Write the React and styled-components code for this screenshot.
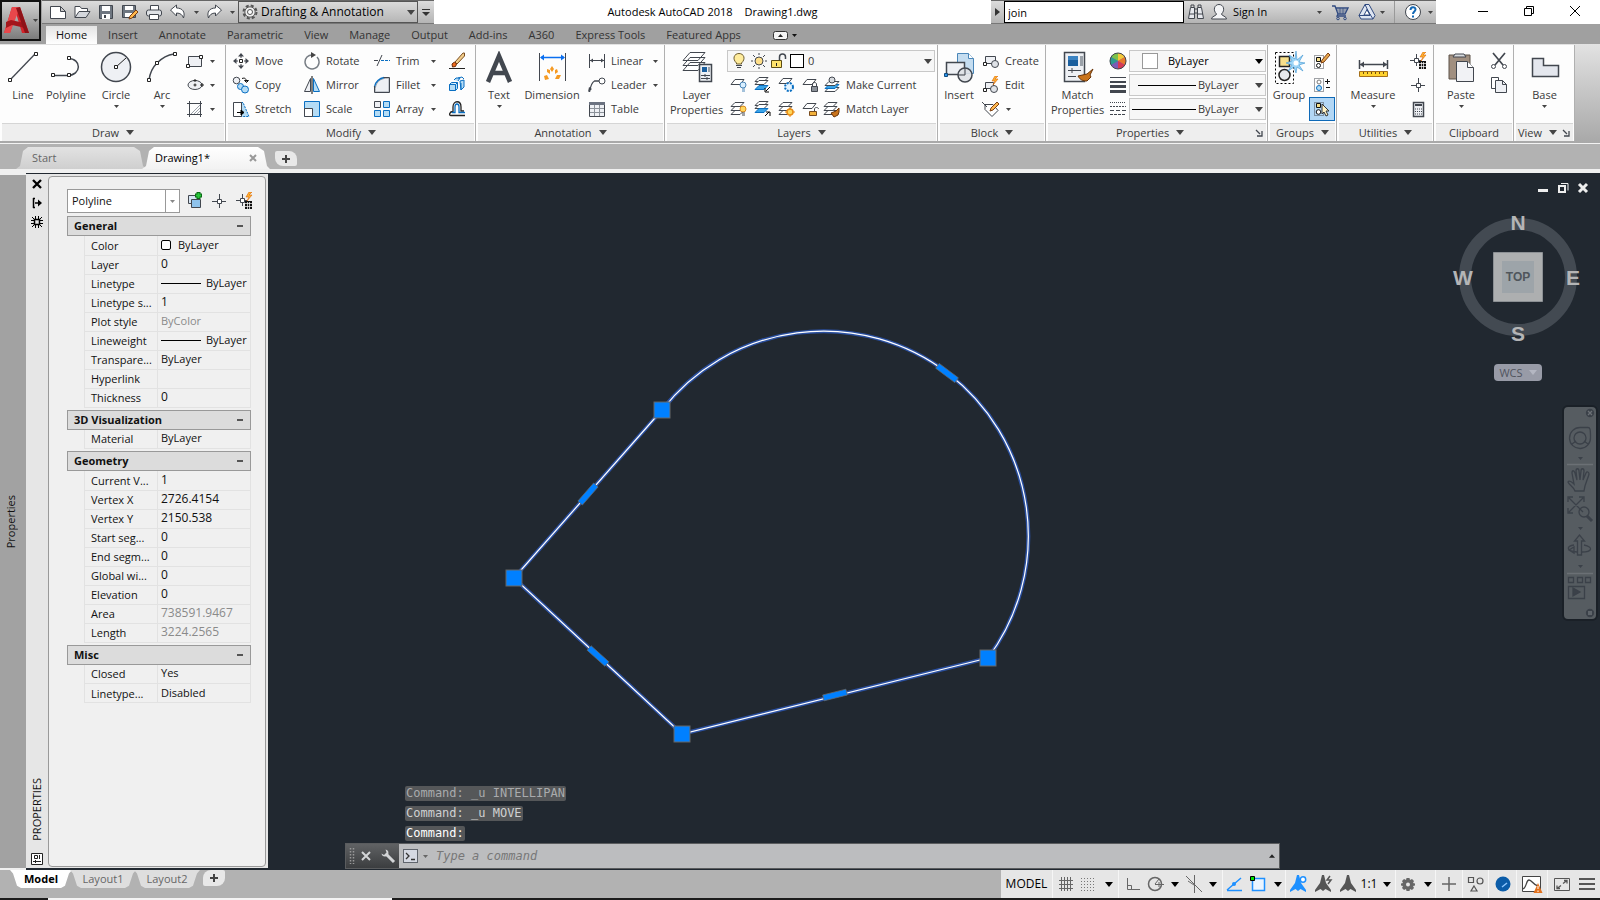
import React, { useState } from "react";
import styled, { createGlobalStyle, css } from "styled-components";

const INK = "#42474f";
const BLUE = "#0a6fc2";
const SKY = "#b5dcf5";
const PAPER = "#eef0f4";

/* ---------- icons ---------- */

const sheet = (y, fill = "#fff") => (
  <path d={`M5 ${y}h9l-4 4H1z`} fill={fill} stroke={INK} />
);

const bulb = (x, y) => (
  <>
    <circle cx={x} cy={y} r="3" fill="#ffd75e" stroke="#d98a1c" />
    <path d={`M${x - 1} ${y + 4}h3M${x - 1} ${y + 6}h3`} stroke={INK} />
  </>
);

const icons = {
  // quick access
  newFile: [18, 18, <path d="M1.500 3.500h10l5 5v7h-15zM11.500 3.500v5h5" fill="#fff" stroke={INK} />],
  open: [18, 18, <><path d="M2 14.500v-11h5l1.500 2h6v3" fill="#fff" stroke={INK} /><path d="M2 14.500l4-6h11l-4 6z" fill="#d4d7dc" stroke={INK} /></>],
  save: [18, 18, <><path d="M2.500 2.500h13v13h-13z" fill="#6e7680" stroke={INK} /><path d="M5 3h8v5H5zM5 11h8v5H5z" fill="#fff" /><path d="M7 12h2v3H7z" fill={INK} /></>],
  saveAs: [18, 18, <><path d="M1.500 2.500h13v12h-13z" fill="#6e7680" stroke={INK} /><path d="M4 3h8v4H4zM4 10h7v4H4z" fill="#fff" /><path d="M8 16l1-3 6-6 2 2-6 6z" fill="#ffb84d" stroke="#7d3f11" /></>],
  print: [18, 18, <><path d="M5.500 7V2.500h8V7" fill="#fff" stroke={INK} /><rect x="1.500" y="7" width="15" height="6" rx="2" fill="#dfe2e6" stroke={INK} /><path d="M4.500 11.500h9v5h-9z" fill="#fff" stroke={INK} /></>],
  undo: [18, 18, <path d="M1.500 7l6-5v3c6 0 9 4 7 10-1-3-3-5-7-5v3z" fill="#fff" stroke={INK} />],
  redo: [18, 18, <path d="M16.500 7l-6-5v3c-6 0-9 4-7 10 1-3 3-5 7-5v3z" fill="#fff" stroke={INK} />],
  cog: [18, 18, <><circle cx="9" cy="9" r="6.500" fill="none" stroke="#555" strokeWidth="2" strokeDasharray="3 2.100" /><circle cx="9" cy="9" r="5.200" fill="#eee" stroke="#555" /><circle cx="9" cy="9" r="2.500" fill="#fff" stroke="#555" /></>],
  binoculars: [18, 18, <><path d="M1.500 15.500l2-11h4v11zM10.500 15.500v-11h4l2 11z" fill="#e7e9ee" stroke={INK} /><path d="M4 4V2h3v2M11 4V2h3v2M7.500 6h3v4h-3zM2 11h5M11 11h5" fill="none" stroke={INK} /></>],
  user: [18, 18, <path d="M1.500 16c0-3 5-3 5-5 -4-4-2-9.500 2.500-9.500S15.500 7 11.500 11c0 2 5 2 5 5z" fill="#f4f5f7" stroke={INK} />],
  cart: [18, 18, <><path d="M1 3h3l3 8h7l3-6H5M7 11l-1 2h9" fill="none" stroke="#304a80" strokeWidth="1.300" /><path d="M6 7h10M7 9h8M9 5v6M12 5v6" stroke="#304a80" strokeWidth=".7" /><circle cx="7" cy="15.500" r="1.300" fill="none" stroke="#304a80" /><circle cx="14" cy="15.500" r="1.300" fill="none" stroke="#304a80" /></>],
  exchange: [18, 18, <><path d="M7 1.500h4l6 11-2 3.500H3l-2-3.500z" fill="#dfe6f2" stroke="#304a80" strokeLinejoin="round" /><path d="M9 6.500l3 5.500H6z" fill="#fff" stroke="#304a80" /><path d="M7 1.500l5 10.500M1 12.500h11M15 16L9 6.500" stroke="#304a80" fill="none" /></>],
  help: [18, 18, <><circle cx="9" cy="9" r="7.500" fill="#fff" stroke={INK} /><path d="M6.500 7c0-3.500 5-3.500 5-.5 0 2-2.500 2-2.500 4.500M9 12.500v2" fill="none" stroke="#1368b5" strokeWidth="2" /></>],
  minimize: [12, 12, <path d="M1 6.500h10" stroke="#000" />],
  restore: [12, 12, <path d="M1.500 3.500h7v7h-7zM3.500 3v-1.500h7v7H9" fill="none" stroke="#000" />],
  close: [12, 12, <path d="M1 1l10 10M11 1L1 11" stroke="#000" />],
  collapse: [15, 9, <><rect x=".5" y=".5" width="14" height="8" rx="2" fill="#f4f4f4" stroke="#333" /><path d="M5 6h5L7.500 3z" fill="#222" /></>],

  // draw
  line: [32, 34, <><path d="M3 29L28 3" stroke={INK} strokeWidth="1.300" /><path d="M1.500 27.500h3v3h-3zM27.500 1.500h3v3h-3z" fill="#fff" stroke="#222" /></>],
  polyline: [32, 34, <><path d="M4 24.500h13c15 0 15-17 1-17" fill="none" stroke={INK} strokeWidth="1.500" /><path d="M1.500 22.500h3v3h-3zM17.500 22.500h3v3h-3zM17.500 5.500h3v3h-3z" fill="#fff" stroke="#222" /></>],
  circle: [32, 34, <><circle cx="16" cy="16" r="14.500" fill={PAPER} stroke={INK} strokeWidth="1.500" /><path d="M16 16l10-9" stroke="#222" /><path d="M14.500 14.500h3v3h-3z" fill="#fff" stroke="#222" /></>],
  arc: [32, 34, <><path d="M3 29c1-8 3-12 8-17C16 7 21 4 28 3" fill="none" stroke={INK} strokeWidth="1.500" /><path d="M1.500 27.500h3v3h-3zM9.500 10.500h3v3h-3zM27.500 1.500h3v3h-3z" fill="#fff" stroke="#222" /></>],
  rect: [18, 18, <><path d="M2.500 4.500h13v10h-13z" fill={PAPER} stroke={INK} /><path d="M.5 12.500h3v3h-3zM13.500 3.500h3v3h-3z" fill="#fff" stroke="#222" /></>],
  ellipse: [18, 18, <><ellipse cx="9" cy="9" rx="7" ry="4.500" fill={PAPER} stroke={INK} /><path d="M7.500 9h3M9 7.500v3M8 4h2v1H8zM15 8h2v2h-2z" stroke="#222" fill="none" /></>],
  hatch: [18, 18, <><path d="M1 3.500h15M1 14.500h15M3.500 1v16M14.500 1v16" stroke={INK} /><path d="M8 14l6-6M11 14l3-3M5 14l9-9" stroke="#9aa1a9" /></>],

  // modify
  move: [18, 18, <><path d="M9 1l3 3.500H6zM9 17l3-3.500H6zM1 9l3.500-3v6zM17 9l-3.500-3v6z" fill={INK} /><path d="M9 4v2M9 12v2M4 9h2M12 9h2" stroke={INK} /><path d="M7.500 7.500h3v3h-3z" fill="#fff" stroke="#222" /></>],
  copy: [18, 18, <><circle cx="4.500" cy="4.500" r="3.300" fill={PAPER} stroke={INK} /><path d="M10 2.500c3-1 4 0 4.500 3M12.500 4.500h4l-2 2z" fill="none" stroke="#111" /><circle cx="8.500" cy="10.500" r="3" fill={SKY} stroke={BLUE} /><circle cx="13" cy="13.500" r="3.500" fill={SKY} stroke={BLUE} /></>],
  stretch: [18, 18, <><path d="M9 2.500h2l6 14H9z" fill={SKY} stroke={BLUE} strokeDasharray="2 1" /><path d="M1.500 2.500h8v14h-8z" fill="#fff" stroke={INK} /><path d="M5 12.500h6M9 10l3 2.500L9 15z" stroke="#000" /></>],
  rotate: [18, 18, <><path d="M10 3a7 7 0 1 0 4 2" fill="none" stroke="#777d84" strokeWidth="1.500" /><path d="M8 0l5 3-5 3z" fill="#444" /></>],
  mirror: [18, 18, <><path d="M7.500 2.500v13h-6z" fill={PAPER} stroke={INK} /><path d="M10.500 2.500v13h6z" fill={SKY} stroke={BLUE} /><path d="M9 0v18" stroke="#000" /></>],
  scale: [18, 18, <><path d="M1.500 1.500h15v15h-15z" fill={SKY} stroke={BLUE} /><path d="M1.500 8.500h8v8h-8z" fill="#fff" stroke={INK} /></>],
  trim: [18, 18, <><path d="M1 8.500h4" stroke={INK} /><path d="M8 8.500h9" stroke={BLUE} strokeDasharray="3 1" /><path d="M4 14L9 3" stroke={INK} /></>],
  fillet: [18, 18, <><path d="M2 16C2 6 7 2 16 2v14z" fill={PAPER} stroke="#9aa1a9" /><path d="M1.500 11C2 6 7 2 11 1.500" fill="none" stroke={BLUE} strokeWidth="1.500" /><path d="M1.500 10v6.500h15V1.500h-6" fill="none" stroke={INK} /></>],
  array: [18, 18, <><path d="M1.500 1.500h6v6h-6z" fill={PAPER} stroke={INK} /><path d="M10.500 1.500h6v6h-6zM1.500 10.500h6v6h-6zM10.500 10.500h6v6h-6z" fill={SKY} stroke={BLUE} /></>],
  erase: [18, 18, <><path d="M1 16.500h16" stroke="#222" /><path d="M7 10l8-9h1.500v3L9 12z" fill="#f1cd8b" stroke="#7a4c1e" /><path d="M4 12l2.500-2 2 2-1 2.500-3 .5z" fill="#f06a1c" stroke="#6a2b09" /></>],
  explode: [18, 18, <><path d="M1.500 8.500l2-2h6v6l-2 2h-6zM1.500 8.500h6l2-2M7.500 8.500v6M6 4l2-2h4l-2 3M12 5l4-1v7l-3 3z" fill={SKY} stroke={BLUE} /><path d="M13 7v7M10 2l4-1 2 2" fill="none" stroke={BLUE} /></>],
  offset: [18, 18, <><path d="M17 15.500H3c-2.500 0-1.500-4 2-4V7c0-7 8-7 8 0v4h3" fill="none" stroke="#222" strokeWidth="1.300" /><path d="M17 12.500h-6V7c0-4-4-4-4 0v5.500H4" fill="none" stroke={BLUE} strokeWidth="1.300" /></>],

  // annotation
  text: [32, 34, <path d="M5 31L16 5l11 26M9 22h14" fill="none" stroke={INK} strokeWidth="4.500" />],
  dimension: [32, 34, <><path d="M3.500 2v28M29.500 2v28" stroke={INK} /><path d="M5 6.500h23" stroke="#0a6ff0" strokeWidth="1.500" /><path d="M4 6.500l4-3v6zM29 6.500l-4-3v6z" fill="#0a6ff0" /><path d="M8 25l3-1 2 4-4 1zM11 18l3 1v4l-3-2zM16 15l2 3-2 3-2-3zM21 18l1 3-3 2v-4zM25 24l-2 4-4 0 2-4z" fill="#f59a23" /></>],
  linear: [18, 18, <><path d="M1.500 2v14M16.500 2v14M2 8.500h14" stroke={INK} /><path d="M2 8.500l3-2v4zM16 8.500l-3-2v4z" fill={INK} /></>],
  leader: [18, 18, <><path d="M1.500 16c1-6 3-10 5-11h5" fill="none" stroke={INK} strokeWidth="1.300" /><path d="M0 16l1-5 3 2z" fill={INK} /><circle cx="14" cy="5" r="3" fill="#fff" stroke={INK} /></>],
  table: [18, 18, <><path d="M1.500 2.500h15v14h-15z" fill={PAPER} stroke={INK} /><path d="M1 2h16v3H1z" fill="#6b7280" /><path d="M2 8.500h14M2 12.500h14M6.500 5v11M11.500 5v11" stroke="#8b9199" /></>],

  // layers
  layerProps: [32, 34, <><path d="M9 1.500h15l-7 8H2zM9 6.500h15l-7 8H2zM9 11.500h15l-7 8H2z" fill="#fff" stroke={INK} /><path d="M18.500 13.500h12v17h-12z" fill={PAPER} stroke={INK} strokeWidth="1.500" /><path d="M21 16h5v5h-5z" fill="#1b5f9e" /><path d="M27 16h2v5h-2z" fill="#9aa1a9" /><path d="M20 24.500h9M20 27.500h9M24 23v3M26 26v3" stroke={INK} /></>],
  bulb: [18, 18, <><path d="M6.500 11C2 7 4 1.500 9 1.500S16 7 11.500 11v1h-5z" fill="#ffec9c" stroke="#6b5a2a" /><path d="M6 13.500h6M7 15.500h4" stroke={INK} /></>],
  sun: [18, 18, <><circle cx="9" cy="9" r="4" fill="#ffdf8a" stroke={INK} /><path d="M9 1v2M9 15v2M1 9h2M15 9h2M3 3l2 2M13 13l2 2M15 3l-2 2M5 13l-2 2" stroke={INK} /></>],
  unlock: [18, 18, <><path d="M9.500 8V5c0-4 6-4 6 0v2" fill="none" stroke={INK} strokeWidth="1.500" /><path d="M1.500 8.500h10v7h-10z" fill="#ffe36b" stroke="#5b4b14" /><path d="M6.500 11v3" stroke="#222" /></>],
  layOff: [18, 18, <><path d="M5 3.500h9l-4 5H1z" fill="#fff" stroke={INK} /><circle cx="13" cy="9" r="3" fill="#d9efff" stroke="#4a86b8" /><path d="M12 13h3M12 15h3" stroke="#4a86b8" /></>],
  layIso: [18, 18, <>{sheet(1.5)}{sheet(4.5)}<path d="M5 9.500h9l-4 4H1z" fill="#39a4e8" stroke={BLUE} /><path d="M16 11l-4 4M11 12v4h4" fill="none" stroke="#000" /></>],
  layFreeze: [18, 18, <><path d="M5 2.500h9l-4 5H1z" fill="#fff" stroke={INK} /><circle cx="11" cy="11" r="4" fill="#e5f4ff" stroke={BLUE} strokeWidth="2" strokeDasharray="2 1.200" /></>],
  layLock: [18, 18, <><path d="M5 3.500h9l-4 5H1z" fill="#fff" stroke={INK} /><path d="M10.500 10V8c0-2 4-2 4 0v2" fill="none" stroke={INK} /><path d="M9.500 10.500h6v5h-6z" fill="#8b9199" stroke={INK} /></>],
  makeCurrent: [18, 18, <><path d="M6 11.500h10l-4 4H2z" fill="#fff" stroke={INK} /><path d="M6 8.500h10l-4 4H2z" fill="#39a4e8" stroke={BLUE} /><path d="M6 5.500h10l-4 4H2z" fill="#fff" stroke={INK} /><circle cx="9" cy="4" r="3" fill="#d7dade" stroke={INK} /></>],
  layOn: [18, 18, <>{sheet(10.5)}{sheet(6.5)}{sheet(2.5)}{bulb(13, 9)}</>],
  layUniso: [18, 18, <>{sheet(1.5)}{sheet(4.5)}<path d="M5 8.500h9l-4 4H1z" fill="#39a4e8" stroke={BLUE} /><path d="M11 16l4-4M12 12h4v4" fill="none" stroke="#000" /></>],
  layThaw: [18, 18, <>{sheet(10.5)}{sheet(6.5)}{sheet(2.5)}<circle cx="12" cy="12" r="3" fill="#ffd75e" stroke="#e88a12" strokeWidth="1.500" /><path d="M12 7v2M12 15v2M7 12h2M15 12h2" stroke="#e88a12" /></>],
  layUnlock: [18, 18, <><path d="M5 3.500h9l-4 5H1z" fill="#fff" stroke={INK} /><path d="M12.500 11V9c0-2 4-2 4 0" fill="none" stroke={INK} /><path d="M7.500 11.500h7v4h-7z" fill="#f3b23b" stroke="#7a4c1e" /></>],
  matchLayer: [18, 18, <>{sheet(10.5)}{sheet(6.5)}{sheet(2.5)}<path d="M16 8l-3 3-5 2 3 4 4-2 1-3z" fill="#c9741c" stroke="#6a3509" /></>],

  // block
  insert: [32, 34, <><path d="M14.500 2.500h11l5 5v15h-16z" fill="#c5ddf0" stroke="#4a86b8" /><path d="M25.500 2.500v5h5" fill="#fff" stroke="#4a86b8" /><path d="M3.500 11.500h18v12h-18z" fill={PAPER} stroke={INK} strokeWidth="1.500" /><circle cx="22" cy="24" r="7" fill="#dfe2e7" fillOpacity=".9" stroke={INK} strokeWidth="1.500" /><path d="M22 17v7h-7" fill="none" stroke={INK} /><path d="M1.500 22.500h3v3h-3z" fill="#2c93e8" stroke="#134d80" /></>],
  create: [18, 18, <><path d="M3.500 4.500h10v7h-10z" fill={PAPER} stroke={INK} /><circle cx="13" cy="12" r="3.500" fill="#dfe2e7" stroke={INK} /><path d="M1.500 10.500h3v3h-3z" fill="#fff" stroke="#222" /></>],
  editBlock: [18, 18, <><path d="M3.500 6.500h8v6h-8z" fill={PAPER} stroke={INK} /><circle cx="12" cy="13" r="3.500" fill="#dfe2e7" stroke={INK} /><path d="M1.500 12.500h3v3h-3z" fill="#fff" stroke="#222" /><path d="M13 0l-3 5h3l-2 4 5-6h-3l3-3z" fill="#ffb02e" stroke="#d9680c" strokeWidth=".6" /></>],
  editAttr: [18, 18, <><path d="M3 4.500h8l5 6-6 6-7-7z" fill="#fff" stroke={INK} strokeLinejoin="round" /><path d="M0 2l5 5" stroke={INK} /><path d="M8 11l1-3 6-6 2 2-6 6z" fill="#ffb84d" stroke="#7d3f11" /></>],

  // properties
  matchProps: [32, 34, <><path d="M2.500 1.500h20v29h-20z" fill={PAPER} stroke={INK} strokeWidth="1.500" /><path d="M6 5h10v10H6z" fill="#1b5f9e" /><path d="M6 5h10v4H6z" fill="#3b83c2" /><path d="M18 5h3v10h-3z" fill="#9aa1a9" /><path d="M6 19.500h13M6 25.500h8M10 17v5" stroke={INK} /><path d="M31 18l-6 5-9 2c2 4 5 5 9 5l4-4-1-2z" fill="#c9741c" stroke="#6a3509" /></>],
  colorWheel: [18, 18, <><circle cx="9" cy="9" r="8" fill="#7b5bb5" /><path d="M9 9L9 1A8 8 0 0 1 16 5z" fill="#f3c83b" /><path d="M9 9l7-4a8 8 0 0 1 0 8z" fill="#e8792b" /><path d="M9 9L9 1A8 8 0 0 0 2 5z" fill="#7cc24a" /><path d="M9 9L2 5a8 8 0 0 0 0 8z" fill="#2d9b8f" /><path d="M9 9l7 4a8 8 0 0 1-7 4z" fill="#d63a55" /><circle cx="9" cy="9" r="8" fill="none" stroke={INK} /></>],
  weights: [18, 18, <path d="M1 1h16v1H1zM1 5h16v2H1zM1 9h16v3H1zM1 14h16v3H1z" fill={INK} />],
  types: [18, 18, <><path d="M1 2.500h16" stroke={INK} strokeDasharray="1 1" /><path d="M1 6.500h16" stroke={INK} strokeDasharray="2 1" /><path d="M1 10.500h16" stroke={INK} strokeDasharray="4 2" /><path d="M1 14.500h16" stroke={INK} strokeDasharray="3 1" /></>],

  // groups
  group: [32, 34, <><path d="M2.500 1.500h18v31h-18z" fill="none" stroke="#000" strokeDasharray="2 2" /><path d="M6.500 5.500h10v10h-10z" fill="#f7e08b" stroke="#222" strokeWidth="1.500" /><circle cx="11.500" cy="24" r="5.500" fill="#e5e8ec" stroke="#222" strokeWidth="1.500" /><path d="M23 0l1 9 6-5-4 7 6 1-6 2 4 6-6-4-1 6-2-6-6 4 4-6-6-2 6-2-3-6 6 4z" fill="#9fd6f7" stroke="#3b94d1" strokeWidth=".6" /><circle cx="23" cy="12" r="2.500" fill="#fff" /></>],
  ungroup: [18, 18, <><path d="M1.500 3.500h9v13h-9z" fill="none" stroke={INK} strokeDasharray="1 1" /><path d="M3.500 5.500h4v4h-4z" fill="#f7e08b" stroke="#111" /><circle cx="5.500" cy="13.500" r="2" fill="#fff" stroke="#111" /><path d="M8 11l1-3 6-7 2 2-6 7z" fill="#e8a74d" stroke="#7d3f11" /></>],
  groupEdit: [18, 18, <><path d="M1.500 2.500h9v13h-9z" fill="none" stroke={INK} strokeDasharray="1 1" /><circle cx="6" cy="6" r="2" fill="#fff" stroke="#777" /><circle cx="6" cy="12" r="2.500" fill={SKY} stroke={BLUE} /><path d="M12 5.500h5M14.500 3v5M13 11.500h4" stroke="#111" /></>],
  groupSelect: [18, 18, <><path d="M1.500 2.500h9v13h-9z" fill="none" stroke={INK} strokeDasharray="1 1" /><path d="M3.500 3.500h4v4h-4z" fill="#f7e08b" stroke="#111" /><circle cx="5.500" cy="12" r="2.300" fill="#fff" stroke="#111" /><path d="M9 4v10l2-2 2 4 2-1-2-4h3z" fill="#fff3c4" stroke="#333" /></>],

  // utilities
  measure: [32, 34, <><path d="M2.500 9v9M30.500 9v9M3 13.500h27" stroke={INK} strokeWidth="1.500" /><path d="M3 13.500l4-3v6zM30 13.500l-4-3v6z" fill={INK} /><path d="M2.500 20.500h28v5h-28z" fill="#ffd22e" stroke="#a5701a" /><path d="M6.500 21v2M10.500 21v2M14.500 21v2M18.500 21v2M22.500 21v2M26.500 21v2" stroke="#6b4a10" /></>],
  quickSelect: [18, 18, <><path d="M1 8.500h11M7.500 2v12" stroke={INK} /><path d="M5.500 6.500h4v4h-4z" fill="#fff" stroke={INK} /><path d="M14 0l-3 5h3l-2 4 5-6h-3l3-3z" fill="#ffb02e" stroke="#d9680c" strokeWidth=".6" /><path d="M10 9h7v8h-7z" fill="#111" /><path d="M10 11.500h7M10 14.500h7M12.500 10v7M14.500 10v7" stroke="#fff" strokeWidth=".7" /></>],
  point: [18, 18, <><path d="M2 9.500h5M11 9.500h5M9.500 2v5M9.500 11v5" stroke={INK} /><path d="M7.500 7.500h4v4h-4z" fill="#fff" stroke={INK} /></>],
  calc: [18, 18, <><path d="M4.500 2.500h10v14h-10z" fill={PAPER} stroke={INK} strokeWidth="1.500" /><path d="M6 4h7v2H6z" fill={INK} /><path d="M6 9h7M6 11.500h7M6 14h7" stroke={INK} strokeDasharray="1 1" /></>],

  // clipboard, view
  paste: [32, 34, <><path d="M4 4h21v24H4z" fill="#a08f80" stroke="#5d5349" /><path d="M8 6l2-3h9l2 3z" fill="#d7dade" stroke={INK} /><path d="M11.500 10.500h11l6 6v14h-17z" fill="#f1f2f5" stroke={INK} /><path d="M22.500 10.500v6h6" fill="#fff" stroke={INK} /></>],
  cut: [18, 18, <><path d="M3 1l10 12M15 1L5 13" stroke={INK} strokeWidth="1.700" /><circle cx="3.500" cy="14.500" r="2" fill="#fff" stroke={INK} /><circle cx="14.500" cy="14.500" r="2" fill="#fff" stroke={INK} /></>],
  clipCopy: [18, 18, <><path d="M1.500 1.500h7v11h-7z" fill="#fff" stroke={INK} /><path d="M5.500 4.500h7l4 4v8h-11z" fill={PAPER} stroke={INK} /><path d="M12.500 4.500v4h4" fill="none" stroke={INK} /></>],
  base: [32, 34, <path d="M3.500 7.500h11v7h15v11h-26z" fill="#e4e7ee" stroke={INK} strokeWidth="1.500" />],
  launcher: [8, 8, <path d="M1 1l4 4M7 2v5H2" fill="none" stroke={INK} strokeWidth="1.300" />],

  // palette
  palClose: [12, 12, <path d="M2 2l8 8M10 2l-8 8" stroke="#000" strokeWidth="2.300" />],
  palPin: [12, 12, <><path d="M2 1.500h2M2.500 1v10M2 10.500h2M4 6h4" fill="none" stroke="#000" strokeWidth="1.500" /><path d="M7 2.500l4 3.500-4 3.500z" fill="#000" /></>],
  palGear: [12, 12, <><path d="M3.500 3.500h5v5h-5z" fill="none" stroke="#000" strokeWidth="1.500" /><path d="M4.500 0v3M7.500 0v3M4.500 9v3M7.500 9v3M0 4.500h3M0 7.500h3M9 4.500h3M9 7.500h3M1 1l2 2M11 1L9 3M1 11l2-2M11 11L9 9" stroke="#000" /></>],
  palMenu: [14, 14, <><path d="M1.500 1.500h11v11h-11z" fill="#fff" stroke="#222" /><path d="M4.500 3.500h3v3h-3zM9.500 3v4M3 9.500h8M5.500 8v3" fill="none" stroke="#222" /></>],
  pickAdd: [18, 18, <><path d="M2.500 3.500h9v8h-9z" fill="#d7e6f4" stroke={INK} /><path d="M5.500 7.500h9v8h-9z" fill="#8fc3ec" stroke={INK} /><path d="M12.500 0v7M9 3.500h7" stroke="#0a6b14" strokeWidth="4" /><path d="M12.500 1v5M10 3.500h5" stroke="#27c93a" strokeWidth="2" /></>],

  // command line
  wrench: [16, 16, <><path d="M14 14L6.500 6.500" stroke="#d3d5d7" strokeWidth="3" /><path d="M5.500 1.500a3.500 3.500 0 1 1-4 4L4 7l2.500-2.500z" fill="#d3d5d7" /></>],
  prompt: [16, 16, <><rect x=".5" y="1.500" width="14" height="13" fill="#d5d9e2" stroke="#60656d" /><path d="M3 5l3 3-3 3M8 11.500h4" fill="none" stroke="#333" strokeWidth="1.300" /></>],
  x: [12, 12, <path d="M2 2l8 8M10 2l-8 8" stroke="#d3d5d7" strokeWidth="2" />],

  // status bar
  grid: [18, 18, <path d="M5.500 2v14M8.500 2v14M11.500 2v14M14.500 2v14M3 5.500h14M3 9.500h14M3 13.500h14" stroke="#666" />],
  dots: [18, 18, <path d="M2 3.500h14M2 6.500h14M2 9.500h14M2 12.500h14M2 15.500h14" stroke="#777" strokeDasharray="1 2" />],
  ortho: [18, 18, <path d="M3.500 3v11.500H16M3.500 10.500h4v4" fill="none" stroke="#666" />],
  polar: [18, 18, <><circle cx="8" cy="9" r="6.500" fill="none" stroke="#666" strokeWidth="1.500" /><path d="M8 9.500h9M8 9l4-5M12 7v5" stroke="#666" fill="none" /></>],
  iso: [18, 18, <path d="M1 1l16 16M9.500 0v18M3 6l6 4" stroke="#666" fill="none" />],
  track: [18, 18, <><path d="M1 15L15 3M1 15.500h15" stroke="#1e90ff" strokeWidth="1.500" /><circle cx="8" cy="9" r="2" fill="#1e90ff" /></>],
  osnap: [18, 18, <><path d="M3.500 3.500h12v12h-12z" fill="#eaf4ff" stroke="#1e90ff" strokeWidth="1.500" /><path d="M1.500 1.500h4v4h-4z" fill="#00e000" stroke="#000" /></>],
  annoVis: [18, 18, <><path d="M7 0h2l2 8 5 7v2l-5.500-3L8 16l-2.500-2L0 17v-2l5-7z" fill="#1e90ff" /><circle cx="13" cy="4.500" r="2.700" fill="#fff" stroke="#1e90ff" strokeWidth="1.500" /></>],
  annoAuto: [18, 18, <><path d="M7 0h2l2 8 5 7v2l-5.500-3L8 16l-2.500-2L0 17v-2l5-7z" fill="#555" /><path d="M15 1l-3 4h4l-3 4" fill="none" stroke="#555" strokeWidth="1.500" /></>],
  annoScale: [18, 18, <path d="M8 0h2l2 8 5 7v2l-5.500-3L9 16l-2.500-2L1 17v-2l5-7z" fill="#555" />],
  gear: [18, 18, <><path d="M7.500 3h3l.5 2 2-1 2 2-1 2 2 .5v2L14 11l1 2-2 2-2-1-.5 2h-3L7 14l-2 1-2-2 1-2-2-.500v-2L4 8 3 6l2-2 2 1z" fill="#666" /><circle cx="9" cy="9.500" r="2" fill="#e6e6e6" /></>],
  plus: [18, 18, <path d="M9 2v14M2 9h14" stroke="#666" strokeWidth="1.500" />],
  isolate: [18, 18, <><path d="M1.500 2.500h5v5h-5z" fill="none" stroke="#555" strokeWidth="1.200" /><circle cx="13" cy="6" r="3" fill="none" stroke="#555" strokeWidth="1.200" /><path d="M7 11l3 5H4z" fill="none" stroke="#555" strokeWidth="1.200" /></>],
  hardware: [18, 18, <><circle cx="9" cy="9" r="7.500" fill="#0b5ca8" /><path d="M8 12l5-4" stroke="#8fc7ff" strokeWidth="1.500" /></>],
  graph: [22, 20, <><path d="M1.500 2.500h18v15h-18z" fill="#fff" stroke="#444" /><path d="M2 15c4-2 3-9 6-9s4 5 9 6" fill="none" stroke="#444" strokeWidth="1.300" /><path d="M17 9l4.500 10h-9z" fill="#e2711d" /><path d="M17 12v3M17 16.500v1.500" stroke="#fff" /></>],
  full: [18, 18, <><path d="M1.500 3.500h15v12h-15z" fill="none" stroke="#555" /><path d="M10 8.500l4-3M11 5.500h3v3M8 10.500l-4 3M4 10.500v3h3" fill="none" stroke="#555" strokeWidth="1.300" /></>],
  menu: [18, 18, <path d="M1 4h16M1 9h16M1 14h16" stroke="#555" strokeWidth="2" />],
};

const Icon = ({ name }) => {
  const [w, h, body] = icons[name];
  return (
    <svg width={w} height={h} viewBox={`0 0 ${w} ${h}`} aria-hidden="true">
      {body}
    </svg>
  );
};

const Arrow = ({ big, color = "#444" }) => (
  <svg width={big ? 8 : 5} height={big ? 5 : 3} viewBox="0 0 10 6" aria-hidden="true">
    <path d="M0 0h10L5 6z" fill={color} />
  </svg>
);

const AppLogo = () => (
  <svg width="28" height="32" viewBox="0 0 28 32" aria-hidden="true">
    <path d="M1 28L9 2h8l9 26h-7L13 8 7 28z" fill="#d2232a" />
    <path d="M9 2h8L7 28H1z" fill="#e8474b" />
    <path d="M3 17l5-2 13 3 3 6-6-2-9-2-6 3z" fill="#a3151b" />
    <path d="M13 3l4-1 9 26h-4z" fill="#8e1218" />
  </svg>
);

/* ---------- shared ---------- */

const GlobalStyle = createGlobalStyle`
  * { box-sizing: border-box; }
  body {
    margin: 0;
    font-family: "Open Sans", "Noto Sans", sans-serif;
    font-size: 11px;
    line-height: 16px;
    color: #3a3a3a;
  }
  button, input, select { font: inherit; color: inherit; }
  button {
    display: flex;
    align-items: center;
    justify-content: center;
    padding: 0;
    border: 0;
    background: none;
    white-space: nowrap;
  }
  svg { flex: none; display: block; }
`;

const Window = styled.div`
  display: flex;
  flex-direction: column;
  min-height: 100vh;
  background: #b2b2b2;
`;

const Spacer = styled.div`
  flex: 1;
`;

/* ---------- title bar and menu ---------- */

const Top = styled.header`
  display: grid;
  grid-template-columns: 42px 1fr;
  grid-template-rows: 24px 20px;
  background: #a0a0a0;
`;

const AppButton = styled.button`
  grid-row: 1 / 3;
  width: 41px;
  height: 41px;
  gap: 2px;
  border: 2px solid #111;
  background: linear-gradient(#d0d0d0, #7c7c7c);
`;

const TitleBar = styled.div`
  display: flex;
  justify-content: space-between;
  background: #fff;
`;

const barFill = css`
  display: flex;
  align-items: center;
  height: 24px;
  background: linear-gradient(#dcdcdc, #b4b4b4);
  border-top: 1px solid #666;
  border-bottom: 1px solid #777;
`;

const QuickAccess = styled.div`
  ${barFill}
  padding-left: 4px;
`;

const ToolButton = styled.button`
  flex: none;
  width: ${(p) => p.$w || 24}px;
  height: ${(p) => p.$h || 22}px;
  gap: ${(p) => p.$gap || 0}px;
`;

const Workspaces = styled.label`
  display: flex;
  align-items: center;
  gap: 2px;
  width: 180px;
  height: 22px;
  padding: 0 2px;
  border: 1px solid #555;
  color: #000;
  font-size: 12px;
`;

const PlainSelect = styled.select`
  flex: 1;
  min-width: 0;
  padding: 0;
  border: 0;
  outline: 0;
  appearance: none;
  background: none;
`;

const Caption = styled.h1`
  display: flex;
  align-items: center;
  gap: 12px;
  margin: 0;
  font-size: 11px;
  font-weight: 400;
  color: #000;
`;

const RightBar = styled.div`
  display: flex;
`;

const InfoCenter = styled.div`
  ${barFill}
  color: #000;
`;

const Search = styled.input`
  width: 180px;
  height: 22px;
  padding: 0 3px;
  border: 1px solid #000;
  background: #fff;
`;

const SignIn = styled.button`
  width: 116px;
  height: 22px;
  padding: 0 2px;
  gap: 5px;
  justify-content: flex-start;

  svg:last-child { margin-left: auto; }
`;

const Divider = styled.span`
  width: 1px;
  height: 22px;
  margin: 0 6px;
  background: #999;
`;

const WindowButtons = styled.div`
  display: flex;
  padding: 0 2px 0 24px;
`;

const MenuTabs = styled.nav`
  display: flex;
  align-items: flex-end;
  gap: 1px;
  padding-left: 4px;
`;

const MenuTab = styled.button`
  height: 18px;
  padding: 0 10px;
  color: #333;
  ${(p) => p.$active && css`
    background: linear-gradient(#e4e4e4, #fff);
    color: #111;
  `}
`;

/* ---------- ribbon ---------- */

const RibbonBar = styled.section`
  display: flex;
  height: 100px;
  padding: 1px 0 2px;
  background: linear-gradient(#e2e2e2, #a8a8a8);
  border-bottom: 1px solid #f2f2f2;
`;

const PanelBox = styled.div`
  display: flex;
  flex-direction: column;
  flex: none;
  width: ${(p) => p.$w}px;
  background: #fdfdfd;
  border-left: 1px solid #fdfdfd;
  border-right: 1px solid #b0b0b0;
`;

const PanelBody = styled.div`
  display: flex;
  flex: 1;
  padding-top: 4px;
`;

const PanelTitle = styled.div`
  display: flex;
  align-items: center;
  height: 18px;
  margin: 0 1px;
  background: #eee;
  border-top: 1px solid #d5d5d5;
`;

const PanelName = styled.button`
  flex: 1;
  gap: 7px;
`;

const BigButton = styled.button`
  flex: none;
  flex-direction: column;
  justify-content: flex-start;
  width: ${(p) => p.$w}px;
  height: 72px;
  padding-top: 2px;

  svg:first-child { margin-bottom: 2px; }
  span + svg { margin-top: 3px; }
`;

const BigLabel = styled.span`
  line-height: 15px;
`;

const Column = styled.div`
  display: flex;
  flex-direction: column;
  flex: none;
  width: ${(p) => p.$w}px;
  margin-left: ${(p) => p.$ml || 0}px;
`;

const SmallButton = styled.button`
  justify-content: flex-start;
  height: 24px;
  gap: 5px;
  width: 100%;

  svg + svg { margin-left: auto; }
  span + svg { margin-left: auto; }
`;

const Toggle = styled.button`
  width: 24px;
  height: 22px;
  margin: 1px 0;
  ${(p) => p.$on && css`
    background: #b3d7f5;
    outline: 1px solid #0f6ab8;
  `}
`;

const IconRow = styled.div`
  display: flex;
  align-items: center;
  height: 24px;
`;

const Combo = styled.label`
  display: flex;
  align-items: center;
  gap: 2px;
  height: 22px;
  margin: 1px 0;
  padding: 0 2px 0 ${(p) => p.$pl || 2}px;
  border: 1px solid #c8c8c8;
  background: #f7f7f7;
  color: ${(p) => (p.$strong ? "#000" : "#3a3a3a")};
`;

const Swatch = styled.span`
  width: ${(p) => p.$s}px;
  height: ${(p) => p.$s}px;
  margin-right: ${(p) => p.$mr || 0}px;
  border: 1px solid ${(p) => p.$c || "#000"};
  border-radius: ${(p) => p.$r || 0}px;
  background: #fff;
`;

const Rule = styled.span`
  width: ${(p) => p.$w}px;
  height: 1px;
  background: #000;
`;

const Panel = ({ title, w, plain, launcher, children }) => (
  <PanelBox $w={w}>
    <PanelBody>{children}</PanelBody>
    <PanelTitle>
      <PanelName>{title}{!plain && <Arrow big />}</PanelName>
      {launcher && <ToolButton $w={14} $h={16} aria-label={`${title} dialog`}><Icon name="launcher" /></ToolButton>}
    </PanelTitle>
  </PanelBox>
);

const Big = ({ icon, label, w, arrow }) => (
  <BigButton $w={w}>
    <Icon name={icon} />
    {label.split("|").map((line) => <BigLabel key={line}>{line}</BigLabel>)}
    {arrow && <Arrow />}
  </BigButton>
);

const Small = ({ icon, label, arrow }) => (
  <SmallButton aria-label={label || icon}>
    <Icon name={icon} />
    {label && <span>{label}</span>}
    {arrow && <Arrow />}
  </SmallButton>
);

const Ribbon = () => (
  <RibbonBar aria-label="Ribbon">
    <Panel title="Draw" w={226}>
      <Big icon="line" label="Line" w={44} />
      <Big icon="polyline" label="Polyline" w={42} />
      <Big icon="circle" label="Circle" w={58} arrow />
      <Big icon="arc" label="Arc" w={34} arrow />
      <Column $w={29} $ml={7}>
        <Small icon="rect" arrow />
        <Small icon="ellipse" arrow />
        <Small icon="hatch" arrow />
      </Column>
    </Panel>
    <Panel title="Modify" w={250}>
      <Column $w={71} $ml={5}>
        <Small icon="move" label="Move" />
        <Small icon="copy" label="Copy" />
        <Small icon="stretch" label="Stretch" />
      </Column>
      <Column $w={70}>
        <Small icon="rotate" label="Rotate" />
        <Small icon="mirror" label="Mirror" />
        <Small icon="scale" label="Scale" />
      </Column>
      <Column $w={63}>
        <Small icon="trim" label="Trim" arrow />
        <Small icon="fillet" label="Fillet" arrow />
        <Small icon="array" label="Array" arrow />
      </Column>
      <Column $w={18} $ml={12}>
        <Small icon="erase" />
        <Small icon="explode" />
        <Small icon="offset" />
      </Column>
    </Panel>
    <Panel title="Annotation" w={189}>
      <Big icon="text" label="Text" w={44} arrow />
      <Big icon="dimension" label="Dimension" w={62} />
      <Column $w={70} $ml={5}>
        <Small icon="linear" label="Linear" arrow />
        <Small icon="leader" label="Leader" arrow />
        <Small icon="table" label="Table" />
      </Column>
    </Panel>
    <Panel title="Layers" w={273}>
      <Big icon="layerProps" label="Layer|Properties" w={61} />
      <Column $w={208}>
        <Combo>
          <Icon name="bulb" /><Icon name="sun" /><Icon name="unlock" />
          <Swatch $s={14} $mr={2} />
          <PlainSelect aria-label="Layer"><option>0</option></PlainSelect>
          <Arrow big />
        </Combo>
        <IconRow>
          {["layOff", "layIso", "layFreeze", "layLock"].map((n) => (
            <ToolButton key={n} aria-label={n}><Icon name={n} /></ToolButton>
          ))}
          <Small icon="makeCurrent" label="Make Current" />
        </IconRow>
        <IconRow>
          {["layOn", "layUniso", "layThaw", "layUnlock"].map((n) => (
            <ToolButton key={n} aria-label={n}><Icon name={n} /></ToolButton>
          ))}
          <Small icon="matchLayer" label="Match Layer" />
        </IconRow>
      </Column>
    </Panel>
    <Panel title="Block" w={108}>
      <Big icon="insert" label="Insert" w={40} />
      <Column $w={60} $ml={3}>
        <Small icon="create" label="Create" />
        <Small icon="editBlock" label="Edit" />
        <IconRow>
          <ToolButton $w={18} aria-label="Edit attributes"><Icon name="editAttr" /></ToolButton>
          <ToolButton $w={16} aria-label="Attribute options"><Arrow /></ToolButton>
        </IconRow>
      </Column>
    </Panel>
    <Panel title="Properties" w={222} launcher>
      <Big icon="matchProps" label="Match|Properties" w={61} />
      <Column $w={20} $ml={1}>
        <Small icon="colorWheel" />
        <Small icon="weights" />
        <Small icon="types" />
      </Column>
      <Column $w={137}>
        <Combo $pl={12} $strong>
          <Swatch $s={16} $mr={8} $c="#999" />
          <PlainSelect aria-label="Object color"><option>ByLayer</option></PlainSelect>
          <Arrow big color="#000" />
        </Combo>
        <Combo $pl={8}>
          <Rule $w={58} />
          <PlainSelect aria-label="Lineweight"><option>ByLayer</option></PlainSelect>
          <Arrow big />
        </Combo>
        <Combo>
          <Rule $w={64} />
          <PlainSelect aria-label="Linetype"><option>ByLayer</option></PlainSelect>
          <Arrow big />
        </Combo>
      </Column>
    </Panel>
    <Panel title="Groups" w={69}>
      <Big icon="group" label="Group" w={40} />
      <Column $w={24} $ml={1}>
        <Toggle aria-label="Ungroup"><Icon name="ungroup" /></Toggle>
        <Toggle aria-label="Group edit"><Icon name="groupEdit" /></Toggle>
        <Toggle $on aria-label="Group selection"><Icon name="groupSelect" /></Toggle>
      </Column>
    </Panel>
    <Panel title="Utilities" w={97}>
      <Big icon="measure" label="Measure" w={70} arrow />
      <Column $w={18} $ml={1}>
        <Small icon="quickSelect" />
        <Small icon="point" />
        <Small icon="calc" />
      </Column>
    </Panel>
    <Panel title="Clipboard" w={80} plain>
      <Big icon="paste" label="Paste" w={52} arrow />
      <Column $w={18} $ml={3}>
        <Small icon="cut" />
        <Small icon="clipCopy" />
      </Column>
    </Panel>
    <Panel title="View" w={61} launcher>
      <Big icon="base" label="Base" w={59} arrow />
    </Panel>
  </RibbonBar>
);

/* ---------- document tabs ---------- */

const FileTabs = styled.nav`
  display: flex;
  align-items: flex-end;
  height: 29px;
  padding-left: 16px;
  border-bottom: 4px solid #f0f0f0;
`;

const FileTab = styled.button`
  justify-content: space-between;
  width: ${(p) => (p.$active ? 128 : 130)}px;
  height: 22px;
  margin-right: -4px;
  padding: 0 13px 0 ${(p) => (p.$active ? 13 : 16)}px;
  background: ${(p) => (p.$active ? "linear-gradient(#fff, #f2f2f2)" : "linear-gradient(#e2e2e2, #cfcfcf)")};
  color: ${(p) => (p.$active ? "#000" : "#666")};
  clip-path: polygon(0 100%, 4px 86%, 7px 18%, 12px 0, calc(100% - 12px) 0, calc(100% - 6px) 18%, calc(100% - 3px) 86%, 100% 100%);
`;

const AddTab = styled.button`
  width: 22px;
  height: ${(p) => p.$h}px;
  margin-left: ${(p) => p.$ml}px;
  margin-bottom: 3px;
  border-radius: ${(p) => (p.$flip ? "8px 2px 8px 2px" : "2px 8px 2px 8px")};
  background: #e8e8e8;
`;

const Cross = () => (
  <svg width="10" height="10" viewBox="0 0 10 10" aria-hidden="true">
    <path d="M5 1v8M1 5h8" stroke="#444" strokeWidth="2" />
  </svg>
);

/* ---------- palette ---------- */

const Work = styled.main`
  display: flex;
  flex: 1;
  background: #212830;
`;

const DockStrip = styled.aside`
  display: flex;
  align-items: center;
  justify-content: center;
  flex: none;
  width: 26px;
  padding-right: 4px;
  background: #a2a2a2;
  border-top: 2px solid #f0f0f0;
  border-bottom: 2px solid #f0f0f0;
  color: #111;
`;

const Upright = styled.span`
  writing-mode: vertical-rl;
  transform: rotate(180deg);
`;

const Palette = styled.aside`
  display: flex;
  flex: none;
  width: 242px;
  margin: 1px 0 2px;
  padding: 2px 2px 1px 0;
  background: #e6e6e6;
`;

const PaletteStrip = styled.div`
  display: flex;
  flex: none;
  flex-direction: column;
  align-items: center;
  gap: 7px;
  width: 22px;
  padding: 2px 0 1px;
  color: #111;
`;

const StripButton = styled.button`
  width: 20px;
  height: 12px;
`;

const StripTitle = styled(Upright)`
  margin-bottom: 4px;
`;

const PaletteBody = styled.div`
  flex: 1;
  min-width: 0;
  padding: 12px 14px 0 18px;
  border: 1px solid #999;
  border-radius: 4px;
  background: #f0f0f0;
`;

const PaletteTop = styled.div`
  display: flex;
  align-items: center;
  margin: 0 -6px 3px 0;
`;

const TypeBox = styled.label`
  display: flex;
  align-items: center;
  flex: none;
  width: 113px;
  height: 24px;
  margin-right: 3px;
  padding-left: 4px;
  border: 1px solid #999;
  background: #fff;
  color: #111;
`;

const TypeArrow = styled.span`
  display: flex;
  align-items: center;
  justify-content: center;
  align-self: stretch;
  width: 14px;
  border-left: 1px solid #999;
`;

const SectionHead = styled.button`
  justify-content: space-between;
  width: 100%;
  height: 20px;
  padding: 0 6px;
  border: 1px solid #999;
  background: #dcdcdc;
  color: #111;
  font-weight: 700;
`;

const PropTable = styled.table`
  width: 167px;
  margin: 0 0 2px 17px;
  border-collapse: collapse;
  table-layout: fixed;
  border-left: 1px solid #e2e2e2;
  border-right: 1px solid #e2e2e2;
  color: #111;
`;

const PropName = styled.th`
  width: 73px;
  height: 19px;
  padding: 1px 0 0 6px;
  border-bottom: 1px solid #e2e2e2;
  line-height: 16px;
  font-weight: 400;
  text-align: left;
  white-space: nowrap;
`;

const PropValue = styled.td`
  padding: 0 2px 1px 3px;
  border-left: 1px solid #e2e2e2;
  border-bottom: 1px solid #e2e2e2;
  line-height: 16px;
  color: ${(p) => (p.$dim ? "#8a8a8a" : "#111")};
  font-size: ${(p) => (p.$num ? 12 : 11)}px;
  white-space: nowrap;
`;

const Sample = styled.span`
  display: flex;
  align-items: center;
  gap: 5px;
`;

const sections = [
  ["General", [
    ["Color", "ByLayer", "swatch"],
    ["Layer", "0"],
    ["Linetype", "ByLayer", "line"],
    ["Linetype s...", "1"],
    ["Plot style", "ByColor", "dim"],
    ["Lineweight", "ByLayer", "line"],
    ["Transpare...", "ByLayer"],
    ["Hyperlink", ""],
    ["Thickness", "0"],
  ]],
  ["3D Visualization", [["Material", "ByLayer"]]],
  ["Geometry", [
    ["Current V...", "1"],
    ["Vertex X", "2726.4154"],
    ["Vertex Y", "2150.538"],
    ["Start seg...", "0"],
    ["End segm...", "0"],
    ["Global wi...", "0"],
    ["Elevation", "0"],
    ["Area", "738591.9467", "dim"],
    ["Length", "3224.2565", "dim"],
  ]],
  ["Misc", [["Closed", "Yes"], ["Linetype...", "Disabled"]]],
];

const Section = ({ title, rows }) => {
  const [open, setOpen] = useState(true);
  return (
    <section>
      <SectionHead aria-expanded={open} onClick={() => setOpen(!open)}>
        {title}
        <svg width="8" height="2" aria-hidden="true"><path d="M1 0h6v2H1z" fill="#555" /></svg>
      </SectionHead>
      {open && (
        <PropTable>
          <tbody>
            {rows.map(([name, value, kind]) => (
              <tr key={name}>
                <PropName scope="row">{name}</PropName>
                <PropValue $dim={kind === "dim"} $num={/^\d/.test(value)}>
                  <Sample>
                    {kind === "swatch" && <Swatch $s={10} $r={2} $mr={2} />}
                    {kind === "line" && <Rule $w={40} />}
                    {value}
                  </Sample>
                </PropValue>
              </tr>
            ))}
          </tbody>
        </PropTable>
      )}
    </section>
  );
};

const PropertiesPalette = () => (
  <Palette aria-label="Properties palette">
    <PaletteStrip>
      <StripButton aria-label="Close palette"><Icon name="palClose" /></StripButton>
      <StripButton aria-label="Auto-hide"><Icon name="palPin" /></StripButton>
      <StripButton aria-label="Palette settings"><Icon name="palGear" /></StripButton>
      <Spacer />
      <StripTitle>PROPERTIES</StripTitle>
      <Icon name="palMenu" />
    </PaletteStrip>
    <PaletteBody>
      <PaletteTop>
        <TypeBox>
          <PlainSelect aria-label="Object type"><option>Polyline</option></PlainSelect>
          <TypeArrow><Arrow color="#888" /></TypeArrow>
        </TypeBox>
        <ToolButton aria-label="Toggle pickadd"><Icon name="pickAdd" /></ToolButton>
        <ToolButton aria-label="Select objects"><Icon name="point" /></ToolButton>
        <ToolButton $w={26} aria-label="Quick select"><Icon name="quickSelect" /></ToolButton>
      </PaletteTop>
      {sections.map(([title, rows]) => <Section key={title} title={title} rows={rows} />)}
    </PaletteBody>
  </Palette>
);

/* ---------- canvas ---------- */

const Canvas = styled.div`
  position: relative;
  flex: 1;
  overflow: hidden;
`;

const Drawing = styled.svg`
  position: absolute;
  inset: 0;
  width: 100%;
  height: 100%;
`;

const ViewButtons = styled.div`
  position: absolute;
  top: 8px;
  right: 10px;
  display: flex;
  gap: 6px;
`;

const ViewCube = styled.div`
  position: absolute;
  top: 34px;
  right: 12px;
  display: flex;
  flex-direction: column;
  align-items: center;
  gap: 17px;
`;

const Wcs = styled.button`
  width: 48px;
  height: 17px;
  gap: 6px;
  border-radius: 4px;
  background: #989ba7;
  color: #50545e;
`;

const NavBar = styled.div`
  position: absolute;
  top: 234px;
  right: 4px;
  display: flex;
  flex-direction: column;
  width: 32px;
  height: 212px;
  border-radius: 4px;
  background: #565c61;
  box-shadow: 0 0 0 2px #1a2027;
`;

const History = styled.div`
  position: absolute;
  left: 137px;
  bottom: 29px;
  display: flex;
  flex-direction: column;
  align-items: flex-start;
  gap: 5px;
`;

const HistoryLine = styled.span`
  height: 15px;
  padding: 0 1px;
  border-radius: 2px;
  background: #555759;
  color: ${(p) => p.$c};
  font: 12px/15px "DejaVu Sans Mono", "Liberation Mono", monospace;
  white-space: pre;
`;

const CommandLine = styled.div`
  position: absolute;
  left: 77px;
  right: 320px;
  bottom: 1px;
  display: flex;
  align-items: center;
  height: 26px;
  border: 1px solid #5a5c5e;
  background: #bcbdbf;
`;

const CommandHandle = styled.div`
  display: flex;
  align-items: center;
  width: 53px;
  height: 24px;
  padding-left: 3px;
  background: linear-gradient(#606264, #3b3d3f);
`;

const CommandInput = styled.input`
  flex: 1;
  height: 24px;
  padding: 0 8px;
  border: 0;
  background: none;
  font: italic 12px "DejaVu Sans Mono", "Liberation Mono", monospace;
  color: #222;

  &::placeholder { color: #777; opacity: 1; }
`;

const vertices = [[394, 237], [246, 405], [414, 561], [720, 485]];
const midGrips = [[320, 321, -49], [330, 483, 42], [567, 522, -14], [679, 200, 37]];
const outline = "M720 485L414 561L246 405L394 237A204.820 204.820 0 0 1 720 485";

const Polyline = () => (
  <Drawing aria-label="Polyline drawing">
    <path d={outline} fill="none" stroke="#2b50a0" strokeWidth="4" />
    <path d={outline} fill="none" stroke="#fff" strokeWidth="1.200" />
    {midGrips.map(([x, y, a]) => (
      <rect key={x} x="-12" y="-3" width="24" height="6" fill="#0080ff" stroke="#666" strokeWidth=".7" transform={`translate(${x} ${y}) rotate(${a})`} />
    ))}
    {vertices.map(([x, y]) => (
      <rect key={x} x={x - 8} y={y - 8} width="16" height="16" fill="#0080ff" stroke="#666" />
    ))}
  </Drawing>
);

const Compass = () => (
  <svg width="140" height="140" viewBox="0 0 140 140" role="img" aria-label="View cube">
    <circle cx="70" cy="70" r="53" fill="none" stroke="#434a52" strokeWidth="12" />
    <path d="M45.500 45.500h49v49h-49z" fill="#adafb0" stroke="#8c9094" />
    <path d="M54 54h32v32H54z" fill="#9da4a9" />
    <g fontFamily="Liberation Sans, sans-serif" fontWeight="700" textAnchor="middle" fill="#b4b5b6">
      <text x="70" y="74" fontSize="12" fill="#50565c">TOP</text>
      <g fontSize="21">
        <text x="70" y="23">N</text>
        <text x="70" y="134">S</text>
        <text x="15" y="78">W</text>
        <text x="125" y="78">E</text>
      </g>
    </g>
  </svg>
);

const NavIcons = () => (
  <svg width="32" height="212" viewBox="0 0 32 212" fill="none" stroke="#3b4149" strokeWidth="1.300" aria-hidden="true">
    <circle cx="26" cy="6" r="3.500" fill="#3b4149" /><path d="M24 4l4 4M28 4l-4 4" stroke="#6b7075" />
    <path d="M16 20.500h8c2 0 2.500 1 2.500 10A10.500 10.500 0 1 1 16 20.500zM8 37l4-3M24 37l-4-3" /><circle cx="16" cy="31" r="6" />
    <path d="M14 50h5l-2.500 3zM14 120h5l-2.500 3zM14 158h5l-2.500 3z" fill="#3b4149" stroke="none" />
    <path d="M3 57.500h26M3 166.500h26" stroke="#6b7075" />
    <path d="M11 84c-1-4-6-6-7-9 1-2 4 0 6 2L8 66c0-3 2-3 3 0l2 7-1-9c0-3 3-3 3 0l1 9 1-9c0-3 3-3 3 0l-1 9 3-7c1-2 3-1 3 1-1 5-4 9-5 17z" />
    <path d="M5 91l14 14M19 91L5 105M4 95v-5h5M15 90h5v5M4 101v5h5" /><circle cx="20" cy="105" r="5" /><path d="M23 109l5 5" strokeWidth="3" />
    <path d="M13.500 148v-14h-3l5-6 5 6h-3v14z" /><path d="M10 138c-8 1-8 6 3 7M20 138c10 2 8 7-2 7M5 143l5-3v6z" />
    <path d="M4.500 170.500h5v5h-5zM13.500 170.500h5v5h-5zM21.500 170.500h5v5h-5zM4.500 179.500h16v12h-16z" /><path d="M9 181l7 4-7 4z" fill="#3b4149" />
    <circle cx="26" cy="206" r="3.500" fill="#3b4149" /><path d="M24 205h4M24 207h4" stroke="#6b7075" />
  </svg>
);

const Model = () => (
  <Canvas>
    <Polyline />
    <ViewButtons>
      <button aria-label="Minimize view"><svg width="14" height="14"><path d="M2 8h10v3H2z" fill="#eee" /></svg></button>
      <button aria-label="Restore view"><svg width="14" height="14"><path d="M3 5h6v6H3z" fill="none" stroke="#eee" strokeWidth="2" /><path d="M5 2.500h7v7" fill="none" stroke="#eee" /></svg></button>
      <button aria-label="Close view"><svg width="14" height="14"><path d="M3 3l8 8M11 3l-8 8" stroke="#eee" strokeWidth="3" /></svg></button>
    </ViewButtons>
    <ViewCube>
      <Compass />
      <Wcs>WCS<Arrow big color="#b4b7c2" /></Wcs>
    </ViewCube>
    <NavBar aria-label="Navigation bar"><NavIcons /></NavBar>
    <History>
      <HistoryLine $c="#a9abad">Command: _u INTELLIPAN</HistoryLine>
      <HistoryLine $c="#d0d1d2">Command: _u MOVE</HistoryLine>
      <HistoryLine $c="#fff">Command:</HistoryLine>
    </History>
    <CommandLine>
      <CommandHandle>
        <svg width="6" height="18" aria-hidden="true"><path d="M1.500 1v16M4.500 1v16" stroke="#999" strokeWidth="1.500" strokeDasharray="1.500 1.500" /></svg>
        <ToolButton $w={22} aria-label="Close command line"><Icon name="x" /></ToolButton>
        <ToolButton $w={22} aria-label="Customize"><Icon name="wrench" /></ToolButton>
      </CommandHandle>
      <ToolButton aria-label="Recent commands"><Icon name="prompt" /></ToolButton>
      <Arrow color="#666" />
      <CommandInput aria-label="Command" placeholder="Type a command" />
      <ToolButton $w={14} aria-label="Command history">
        <svg width="6" height="4" viewBox="0 0 10 6"><path d="M0 6h10L5 0z" fill="#222" /></svg>
      </ToolButton>
    </CommandLine>
  </Canvas>
);

/* ---------- bottom bar ---------- */

const Bottom = styled.footer`
  display: flex;
  justify-content: space-between;
  height: 28px;
`;

const LayoutTabs = styled.nav`
  display: flex;
  align-items: flex-start;
  padding-left: 10px;
`;

const LayoutTab = styled.button`
  width: ${(p) => (p.$active ? 62 : 66)}px;
  height: 18px;
  margin-right: -2px;
  background: ${(p) => (p.$active ? "#fff" : "#dedede")};
  color: ${(p) => (p.$active ? "#000" : "#666")};
  font-weight: ${(p) => (p.$active ? 700 : 400)};
  clip-path: polygon(0 0, 100% 0, calc(100% - 3px) 20%, calc(100% - 7px) 88%, calc(100% - 11px) 100%, 11px 100%, 7px 88%, 3px 20%);
`;

const StatusBar = styled.div`
  display: flex;
  align-items: center;
  padding-right: 2px;
  background: #e6e6e6;
  color: #000;
`;

const StatusCell = styled.button`
  width: ${(p) => p.$w}px;
  height: 28px;
  font-size: 12px;
  border-left: ${(p) => (p.$sep ? "1px solid #f6f6f6" : "0")};
`;

const TaskEdge = styled.div`
  height: 2px;
  background: linear-gradient(90deg, #1c1c1c 3%, #f4f4f4 3%, #f4f4f4 24.5%, #1c1c1c 24.5%);
`;

const status = [
  ["MODEL", 51], ["grid", 25, 1], ["dots", 22], ["arrow", 19],
  ["ortho", 28, 1], ["polar", 19], ["arrow", 19], ["iso", 20], ["arrow", 18],
  ["track", 24, 1], ["osnap", 24], ["arrow", 15],
  ["annoVis", 27, 1], ["annoAuto", 24], ["annoScale", 23], ["1:1", 20], ["arrow", 16],
  ["gear", 25, 1], ["arrow", 15], ["plus", 27, 1], ["isolate", 26, 1],
  ["hardware", 28, 1], ["graph", 31, 1], ["full", 28, 1], ["menu", 23],
];

const StatusItem = ({ id, w, sep }) => (
  <StatusCell $w={w} $sep={sep} aria-label={id}>
    {id === "arrow" ? <Arrow big color="#000" /> : icons[id] ? <Icon name={id} /> : id}
  </StatusCell>
);

const menuTabs = ["Home", "Insert", "Annotate", "Parametric", "View", "Manage", "Output", "Add-ins", "A360", "Express Tools", "Featured Apps"];

const App = () => (
  <>
    <GlobalStyle />
    <Window>
      <Top>
        <AppButton aria-label="Application menu"><AppLogo /><Arrow /></AppButton>
        <TitleBar>
          <QuickAccess>
            {["newFile", "open", "save", "saveAs", "print", "undo"].map((n) => (
              <ToolButton key={n} aria-label={n}><Icon name={n} /></ToolButton>
            ))}
            <ToolButton $w={12} aria-label="Undo list"><Arrow /></ToolButton>
            <ToolButton aria-label="redo"><Icon name="redo" /></ToolButton>
            <ToolButton $w={12} aria-label="Redo list"><Arrow /></ToolButton>
            <Workspaces>
              <Icon name="cog" />
              <PlainSelect aria-label="Workspace"><option>Drafting &amp; Annotation</option></PlainSelect>
              <Arrow big />
            </Workspaces>
            <ToolButton $w={16} aria-label="Customize toolbar">
              <svg width="8" height="9"><path d="M0 1.500h8" stroke="#333" /><path d="M0 4h8L4 8z" fill="#333" /></svg>
            </ToolButton>
          </QuickAccess>
          <Caption><span>Autodesk AutoCAD 2018</span><span>Drawing1.dwg</span></Caption>
          <RightBar>
            <InfoCenter>
              <ToolButton $w={13} aria-label="Collapse search">
                <svg width="5" height="8"><path d="M0 0v8l5-4z" fill="#333" /></svg>
              </ToolButton>
              <Search aria-label="Search" defaultValue="join" />
              <ToolButton aria-label="Search help"><Icon name="binoculars" /></ToolButton>
              <SignIn><Icon name="user" />Sign In<Arrow /></SignIn>
              <ToolButton $w={32} aria-label="App store"><Icon name="cart" /></ToolButton>
              <ToolButton $w={22} aria-label="Exchange"><Icon name="exchange" /></ToolButton>
              <ToolButton $w={10} aria-label="Exchange options"><Arrow /></ToolButton>
              <Divider />
              <ToolButton aria-label="Help"><Icon name="help" /></ToolButton>
              <ToolButton $w={11} aria-label="Help options"><Arrow /></ToolButton>
            </InfoCenter>
            <WindowButtons>
              {["minimize", "restore", "close"].map((n) => (
                <ToolButton key={n} $w={46} aria-label={n}><Icon name={n} /></ToolButton>
              ))}
            </WindowButtons>
          </RightBar>
        </TitleBar>
        <MenuTabs>
          {menuTabs.map((t, i) => <MenuTab key={t} $active={i === 0}>{t}</MenuTab>)}
          <ToolButton $w={66} $h={18} $gap={4} aria-label="Minimize ribbon"><Icon name="collapse" /><Arrow color="#111" /></ToolButton>
        </MenuTabs>
      </Top>
      <Ribbon />
      <FileTabs>
        <FileTab>Start</FileTab>
        <FileTab $active>
          Drawing1*
          <svg width="8" height="8"><path d="M1 1l6 6M7 1L1 7" stroke="#999" strokeWidth="2" /></svg>
        </FileTab>
        <AddTab $h={15} $ml={9} aria-label="New tab"><Cross /></AddTab>
      </FileTabs>
      <Work>
        <DockStrip><Upright>Properties</Upright></DockStrip>
        <PropertiesPalette />
        <Model />
      </Work>
      <Bottom>
        <LayoutTabs>
          <LayoutTab $active>Model</LayoutTab>
          <LayoutTab>Layout1</LayoutTab>
          <LayoutTab>Layout2</LayoutTab>
          <AddTab $h={16} $ml={5} $flip aria-label="New layout"><Cross /></AddTab>
        </LayoutTabs>
        <StatusBar>
          {status.map(([id, w, sep], i) => <StatusItem key={i} id={id} w={w} sep={sep} />)}
        </StatusBar>
      </Bottom>
      <TaskEdge />
    </Window>
  </>
);

export default App;
